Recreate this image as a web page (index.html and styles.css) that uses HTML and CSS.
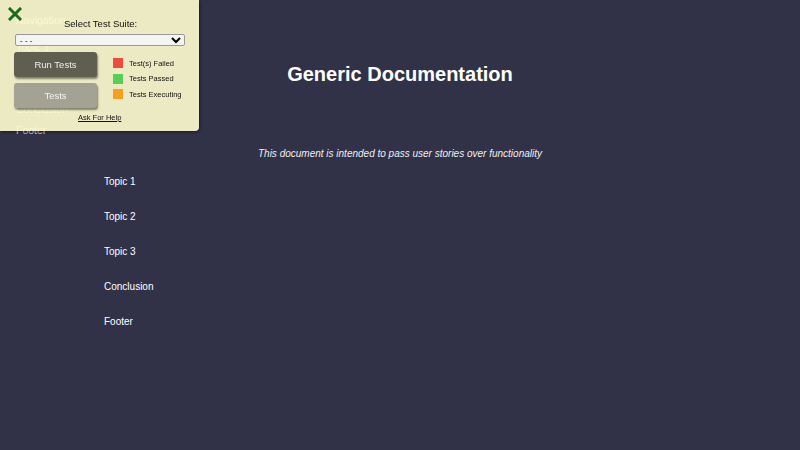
FILE: index.html
```html
<!DOCTYPE html>
<html>
<head>
<meta charset="utf-8">
<link rel="stylesheet" href="styles.css">
</head>
<body>
<div class="page">
  <nav class="nav">
    <div class="nav-title">Navigation</div>
    <ul class="nav-list">
      <li>Topic 1</li>
      <li>Topic 2</li>
      <li>Topic 3</li>
      <li>Conclusion</li>
      <li>Footer</li>
    </ul>
  </nav>
  <main class="main">
    <h1 class="title">Generic Documentation</h1>
    <p class="intro">This document is intended to pass user stories over functionality</p>
    <ul class="topics">
      <li>Topic 1</li>
      <li>Topic 2</li>
      <li>Topic 3</li>
      <li>Conclusion</li>
      <li>Footer</li>
    </ul>
  </main>
</div>
<div class="panel">
  <div class="panel-head">
    <svg class="close" width="14" height="14" viewBox="0 0 14 14"><path d="M2 2 L12 12 M12 2 L2 12" stroke="#1c6b1c" stroke-width="3" stroke-linecap="square"/></svg>
    <div class="panel-label">Select Test Suite:</div>
  </div>
  <select class="suite"><option>- - -</option></select>
  <div class="panel-body">
    <div class="buttons">
      <button class="btn btn-run">Run Tests</button>
      <button class="btn btn-tests">Tests</button>
    </div>
    <ul class="legend">
      <li><span class="sw red"></span>Test(s) Failed</li>
      <li><span class="sw green"></span>Tests Passed</li>
      <li><span class="sw orange"></span>Tests Executing</li>
    </ul>
  </div>
  <a class="help" href="#">Ask For Help</a>
</div>
</body>
</html>
```
FILE: styles.css
```css
html, body { margin: 0; padding: 0; }
body {
  background: #313248;
  font-family: "Liberation Sans", Arial, sans-serif;
  color: #fff;
  width: 800px;
  height: 450px;
  overflow: hidden;
}
.page { display: grid; }
.nav, .main { grid-area: 1 / 1; }
.nav { padding: 14px 0 0 16px; font-size: 10.5px; color: #cfcfd8; }
.nav-title { line-height: 12px; }
.nav-list { list-style: none; margin: 10.6px 0 0; padding: 0; }
.nav-list li { line-height: 20.75px; }
.main { display: flex; flex-direction: column; }
.title {
  margin: 61px 0 0;
  text-align: center;
  font-size: 20px;
  line-height: 26px;
  font-weight: bold;
}
.intro {
  margin: 60px 0 0;
  text-align: center;
  font-style: italic;
  font-size: 10px;
  line-height: 14px;
  color: #f0f0f0;
}
.topics { list-style: none; margin: 14px 0 0; padding: 0 0 0 104px; font-size: 10px; }
.topics li { line-height: 14px; margin-bottom: 21px; }

.panel {
  position: fixed;
  top: 0; left: 0;
  width: 199px;
  height: 131px;
  box-sizing: border-box;
  background: rgba(255, 253, 208, 0.91);
  border-bottom-right-radius: 4px;
  box-shadow: 1px 1px 3px rgba(0,0,0,0.5);
  color: #111;
  padding: 7px 0 0 0;
}
.panel-head { display: flex; align-items: flex-start; padding-left: 8px; height: 26px; }
.close { display: block; }
.panel-label { font-size: 9.5px; margin: 11px 0 0 42px; line-height: 11px; }
.suite {
  display: block;
  margin: 1px 0 0 15px;
  width: 170px;
  height: 12px;
  font-size: 8px;
  padding: 0;
  border: 1px solid #999;
  border-radius: 2px;
  background: #f4f4f4;
}
.panel-body { display: flex; margin-top: 6px; padding-left: 14px; }
.buttons { display: flex; flex-direction: column; gap: 6px; }
.btn {
  width: 83px;
  height: 25px;
  border: none;
  border-radius: 3px;
  font-family: "Liberation Sans", Arial, sans-serif;
  font-size: 9.5px;
  box-shadow: 1px 2px 2px rgba(0,0,0,0.45);
}
.btn-run { background: #5f5e50; color: #eee; }
.btn-tests { background: #a3a293; color: #f4f4f4; }
.legend { list-style: none; margin: 6px 0 0 16px; padding: 0; font-size: 7.5px; }
.legend li { display: flex; align-items: center; height: 10px; margin-bottom: 5.5px; }
.sw { width: 10px; height: 10px; margin-right: 6px; }
.red { background: #f04a3c; }
.green { background: #55d055; }
.orange { background: #f5a01e; }
.help {
  display: block;
  width: max-content;
  margin: 5px 0 0 78px;
  font-size: 7.5px;
  color: #111;
  text-decoration: underline;
}
```
